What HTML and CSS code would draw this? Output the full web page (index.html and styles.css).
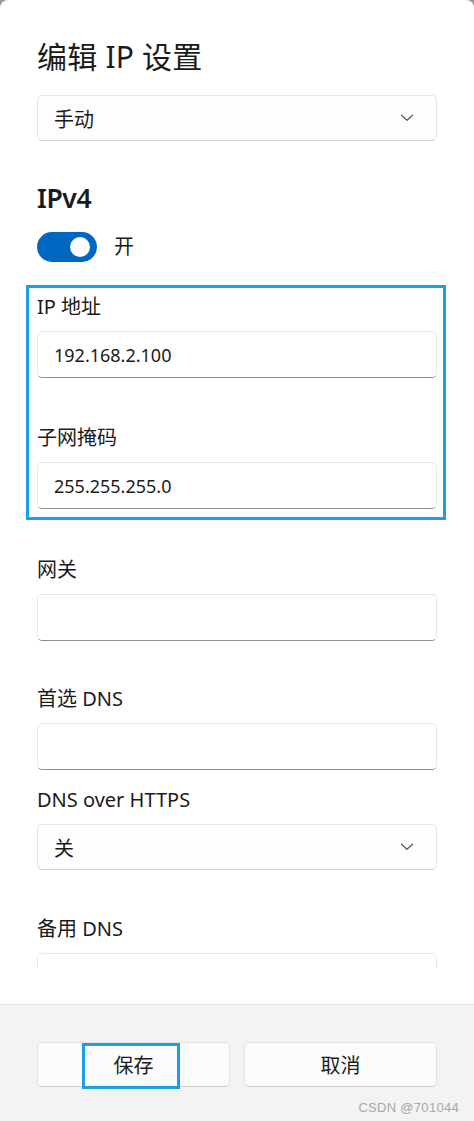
FILE: index.html
```html
<!DOCTYPE html>
<html lang="zh-CN">
<head>
<meta charset="utf-8">
<title>编辑 IP 设置</title>
<link rel="stylesheet" href="styles.css">
</head>
<body>
<div class="dialog">
  <div class="scroll">
    <h1 class="title">编辑 IP 设置</h1>
    <div class="select select-mode">
      <span>手动</span>
      <svg class="chev" width="14" height="8" viewBox="0 0 14 8"><path d="M1.5 1.2 L7 6.3 L12.5 1.2" fill="none" stroke="#5a5a5a" stroke-width="1.2" stroke-linecap="round" stroke-linejoin="round"/></svg>
    </div>

    <h2 class="section">IPv4</h2>
    <div class="toggle-row">
      <span class="toggle"><span class="knob"></span></span>
      <span class="toggle-text">开</span>
    </div>

    <div class="highlight">
      <div class="group g-ip">
        <div class="label">IP 地址</div>
        <div class="input">192.168.2.100</div>
      </div>
      <div class="group g-mask">
        <div class="label">子网掩码</div>
        <div class="input">255.255.255.0</div>
      </div>
    </div>

    <div class="group g-gw">
      <div class="label">网关</div>
      <div class="input"></div>
    </div>
    <div class="group g-dns1">
      <div class="label">首选 DNS</div>
      <div class="input"></div>
    </div>
    <div class="group g-doh">
      <div class="label">DNS over HTTPS</div>
      <div class="select">
        <span>关</span>
        <svg class="chev" width="14" height="8" viewBox="0 0 14 8"><path d="M1.5 1.2 L7 6.3 L12.5 1.2" fill="none" stroke="#5a5a5a" stroke-width="1.2" stroke-linecap="round" stroke-linejoin="round"/></svg>
      </div>
    </div>
    <div class="group g-dns2">
      <div class="label">备用 DNS</div>
      <div class="input"></div>
    </div>
  </div>

  <div class="footer">
    <div class="buttons">
      <button class="btn">保存<span class="focus"></span></button>
      <button class="btn">取消</button>
    </div>
    <span class="watermark">CSDN @701044</span>
  </div>
</div>
</body>
</html>
```

FILE: styles.css
```css
html {
  background: #9a9a9a;
}
body {
  margin: 0;
  font-family: "Noto Sans", "Noto Sans CJK SC", sans-serif;
  color: #1b1b1b;
}
.dialog {
  height: 1121px;
  background: #ffffff;
  border-radius: 8px 8px 0 0;
  display: flex;
  flex-direction: column;
  overflow: hidden;
}
.scroll {
  height: 968px;
  overflow: hidden;
  padding: 37px 37px 0 37px;
  box-sizing: border-box;
  flex: none;
}
.title {
  margin: 0;
  font-size: 30px;
  line-height: 40px;
  font-weight: 400;
  letter-spacing: 0.2px;
}
.select {
  height: 46px;
  box-sizing: border-box;
  border: 1px solid #e6e6e6;
  border-bottom-color: #cfcfcf;
  border-radius: 5px;
  background: #fdfdfd;
  display: flex;
  align-items: center;
  justify-content: space-between;
  padding: 0 22px 0 16px;
  font-size: 20px;
}
.select-mode {
  margin-top: 18px;
}
.chev {
  display: block;
}
.section {
  margin: 39px 0 0 0;
  font-size: 26.5px;
  line-height: 36px;
  font-weight: 600;
  letter-spacing: -0.4px;
}
.toggle-row {
  margin-top: 16px;
  height: 30px;
  display: flex;
  align-items: center;
  gap: 17px;
}
.toggle {
  width: 60px;
  height: 30px;
  border-radius: 15px;
  background: #0067c0;
  display: flex;
  align-items: center;
  justify-content: flex-end;
  padding-right: 7px;
  box-sizing: border-box;
}
.knob {
  width: 20px;
  height: 20px;
  border-radius: 50%;
  background: #ffffff;
}
.toggle-text {
  font-size: 20px;
  line-height: 24px;
}
.highlight {
  margin: 23px -9px 0 -11px;
  border: 3px solid #1e9fe3;
  padding: 7px 6px 8px 8px;
}
.group .label {
  font-size: 20px;
  line-height: 24px;
  margin-bottom: 12px;
}
.input {
  height: 47px;
  box-sizing: border-box;
  border: 1px solid #e8e8e8;
  border-bottom: 1px solid #8c8c8c;
  border-radius: 5px;
  background: #ffffff;
  padding: 0 16px;
  display: flex;
  align-items: center;
  font-size: 18px;
}
.g-mask {
  margin-top: 48px;
}
.g-gw {
  margin-top: 38px;
}
.g-dns1 {
  margin-top: 46px;
}
.g-doh {
  margin-top: 18px;
}
.g-dns2 {
  margin-top: 47px;
}
.footer {
  margin-top: auto;
  height: 117px;
  box-sizing: border-box;
  background: #f3f3f3;
  border-top: 1px solid #e3e3e3;
  padding: 37px 37px 0 37px;
  position: relative;
}
.buttons {
  display: grid;
  grid-template-columns: 1fr 1fr;
  gap: 14px;
}
.btn {
  position: relative;
  height: 45px;
  border: 1px solid #e3e3e3;
  border-bottom-color: #cccccc;
  border-radius: 5px;
  background: #fbfbfb;
  font-family: "Noto Sans", "Noto Sans CJK SC", sans-serif;
  font-size: 20px;
  color: #1b1b1b;
  padding: 0;
}
.focus {
  position: absolute;
  left: 44px;
  top: 0;
  width: 98px;
  height: 46px;
  box-sizing: border-box;
  border: 3px solid #1e9fe3;
}
.watermark {
  position: absolute;
  right: 15px;
  bottom: 6px;
  font-family: "Liberation Sans", sans-serif;
  font-size: 13px;
  color: #a8a8a8;
  letter-spacing: 0.3px;
}
```
